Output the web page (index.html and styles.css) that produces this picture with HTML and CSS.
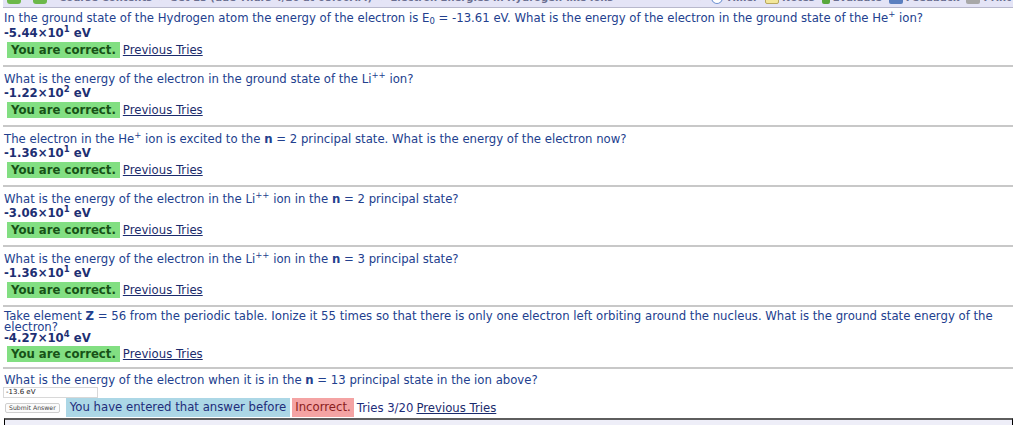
FILE: index.html
```html
<!DOCTYPE html>
<html>
<head>
<meta charset="utf-8">
<link rel="stylesheet" href="styles.css">
</head>
<body>
<div class="page">
  <div class="topbar">
    <div class="topbar-inner">
      <div class="crumbs">
        <span class="arrow"></span><span class="arrow"></span>
        <span class="crumb">Course Contents</span><span class="crumb">»</span>
        <span class="crumb">Set 13 (due Thurs 4/20 at 08:00AM)</span><span class="crumb">»</span>
        <span class="crumb">Electron Energies in Hydrogen-like Ions</span>
      </div>
      <div class="tools">
        <span class="crumb">»</span>
        <span class="ticon timer"></span><span class="crumb">Timer</span>
        <span class="ticon notes"></span><span class="crumb">Notes</span>
        <span class="ticon evaluate"></span><span class="crumb">Evaluate</span>
        <span class="ticon feedback"></span><span class="crumb">Feedback</span>
        <span class="ticon print"></span><span class="crumb">Print</span>
      </div>
    </div>
  </div>

  <div class="block first">
    <div class="q">In the ground state of the Hydrogen atom the energy of the electron is E<sub>0</sub> = -13.61 eV. What is the energy of the electron in the ground state of the He<sup>+</sup> ion?</div>
    <div class="ans">-5.44×10<sup>1</sup> eV</div>
    <div class="status"><span class="ok">You are correct.</span> <a class="prev" href="#">Previous Tries</a></div>
  </div>

  <div class="block">
    <div class="q">What is the energy of the electron in the ground state of the Li<sup>++</sup> ion?</div>
    <div class="ans">-1.22×10<sup>2</sup> eV</div>
    <div class="status"><span class="ok">You are correct.</span> <a class="prev" href="#">Previous Tries</a></div>
  </div>

  <div class="block">
    <div class="q">The electron in the He<sup>+</sup> ion is excited to the <b>n</b> = 2 principal state. What is the energy of the electron now?</div>
    <div class="ans">-1.36×10<sup>1</sup> eV</div>
    <div class="status"><span class="ok">You are correct.</span> <a class="prev" href="#">Previous Tries</a></div>
  </div>

  <div class="block">
    <div class="q">What is the energy of the electron in the Li<sup>++</sup> ion in the <b>n</b> = 2 principal state?</div>
    <div class="ans">-3.06×10<sup>1</sup> eV</div>
    <div class="status"><span class="ok">You are correct.</span> <a class="prev" href="#">Previous Tries</a></div>
  </div>

  <div class="block">
    <div class="q">What is the energy of the electron in the Li<sup>++</sup> ion in the <b>n</b> = 3 principal state?</div>
    <div class="ans">-1.36×10<sup>1</sup> eV</div>
    <div class="status"><span class="ok">You are correct.</span> <a class="prev" href="#">Previous Tries</a></div>
  </div>

  <div class="block zblock">
    <div class="q wrap">Take element <b>Z</b> = 56 from the periodic table. Ionize it 55 times so that there is only one electron left orbiting around the nucleus. What is the ground state energy of the electron?</div>
    <div class="ans">-4.27×10<sup>4</sup> eV</div>
    <div class="status"><span class="ok">You are correct.</span> <a class="prev" href="#">Previous Tries</a></div>
  </div>

  <div class="block last">
    <div class="q">What is the energy of the electron when it is in the <b>n</b> = 13 principal state in the ion above?</div>
    <div class="input">-13.6 eV</div>
    <div class="submit-row">
      <span class="submit">Submit Answer</span>
      <span class="entered">You have entered that answer before</span>
      <span class="wrong">Incorrect.</span>
      <span class="tries">Tries 3/20</span>
      <a class="prev" href="#">Previous Tries</a>
    </div>
  </div>
  <div class="nextbox"></div>
</div>
</body>
</html>
```
FILE: styles.css
```css
html, body {
  margin: 0;
  padding: 0;
  background: #ffffff;
  overflow: hidden;
}
body {
  font-family: "DejaVu Sans", Verdana, sans-serif;
  font-size: 11.7px;
  color: #22408e;
}
.page {
  width: 1010px;
  margin-left: 3px;
}
.topbar {
  height: 7px;
  overflow: hidden;
  background: #e4e4f6;
  border-bottom: 1px solid #b8b8cc;
}
.topbar-inner {
  display: flex;
  justify-content: space-between;
  margin-top: -11px;
  height: 15px;
  align-items: flex-end;
}
.crumbs, .tools {
  display: flex;
  align-items: flex-end;
  gap: 6px;
}
.crumbs { padding-left: 4px; }
.tools { padding-right: 2px; gap: 3px; }
.crumb {
  font-size: 10px;
  line-height: 12px;
  font-weight: bold;
  color: #6a6e90;
}
.arrow {
  width: 14px;
  height: 12px;
  border-radius: 3px;
  background: #6cb84a;
  margin-right: 6px;
}
.ticon {
  width: 12px;
  height: 11px;
  border-radius: 2px;
  margin-left: 4px;
}
.timer { border: 1px solid #6a8fd0; border-radius: 50%; background: #fff; width: 10px; }
.notes { background: #f3e79a; border: 1px solid #b8a860; }
.evaluate { background: #58a83c; width: 8px; }
.feedback { background: #5b7fbf; width: 14px; }
.print { background: #a8a8a8; width: 14px; }

.block {
  border-top: 2px solid #c8c8c8;
  padding: 6px 0 7px 1px;
}
.block.first {
  border-top: none;
  padding-top: 4px;
}
.block.first .ans { margin-top: 2px; }
.q {
  line-height: 12px;
}
.q.wrap {
  line-height: 11px;
  max-width: 1000px;
  margin-top: -2px;
  margin-bottom: -3px;
}
.block.zblock { padding-bottom: 5px; }
.block.zblock .status { margin-top: 1px; }
sup, sub {
  font-size: 8.5px;
  line-height: 0;
}
sub { vertical-align: -2px; }
.ans {
  font-weight: bold;
  color: #1d2f73;
  line-height: 14px;
  margin-top: 1px;
}
.ans sup { vertical-align: 5px; }
.status {
  margin-top: 2px;
  line-height: 16px;
  display: flex;
  align-items: center;
  gap: 3px;
}
.ok {
  background: #82df82;
  color: #175217;
  font-weight: bold;
  padding: 0 4px;
  margin-left: 3px;
  height: 16px;
}
.prev {
  color: #1b2b6c;
  text-decoration: underline;
}
.block.last {
  padding: 5px 0 0 1px;
}
.input {
  width: 91px;
  height: 9px;
  border: 1px solid #d8d8d8;
  font-size: 7px;
  line-height: 9px;
  color: #222;
  padding-left: 2px;
  margin-top: 1px;
  margin-left: -1px;
}
.submit-row {
  display: flex;
  align-items: center;
  height: 19px;
}
.submit {
  font-size: 6.2px;
  line-height: 8px;
  color: #444;
  border: 1px solid #cfcfcf;
  border-radius: 2px;
  background: #fbfbfb;
  padding: 0 3px;
  margin: 1px 6px 0 1px;
}
.entered {
  background: #acd7e6;
  color: #1e2c7a;
  padding: 0 4px;
  line-height: 19px;
}
.wrong {
  background: #f4a3a3;
  color: #8a1d1d;
  padding: 0 3px;
  line-height: 19px;
  margin-left: 2px;
}
.tries {
  color: #1e2c7a;
  margin-left: 3px;
  margin-right: 3px;
}
.submit-row .prev { color: #1b2b6c; }
.nextbox {
  height: 20px;
  margin-left: 1px;
  margin-top: 1px;
  border-top: 2px solid #5e5e5e;
  border-left: 1px solid #000;
  border-right: 1px solid #000;
  background: #eeeef8;
}
```
